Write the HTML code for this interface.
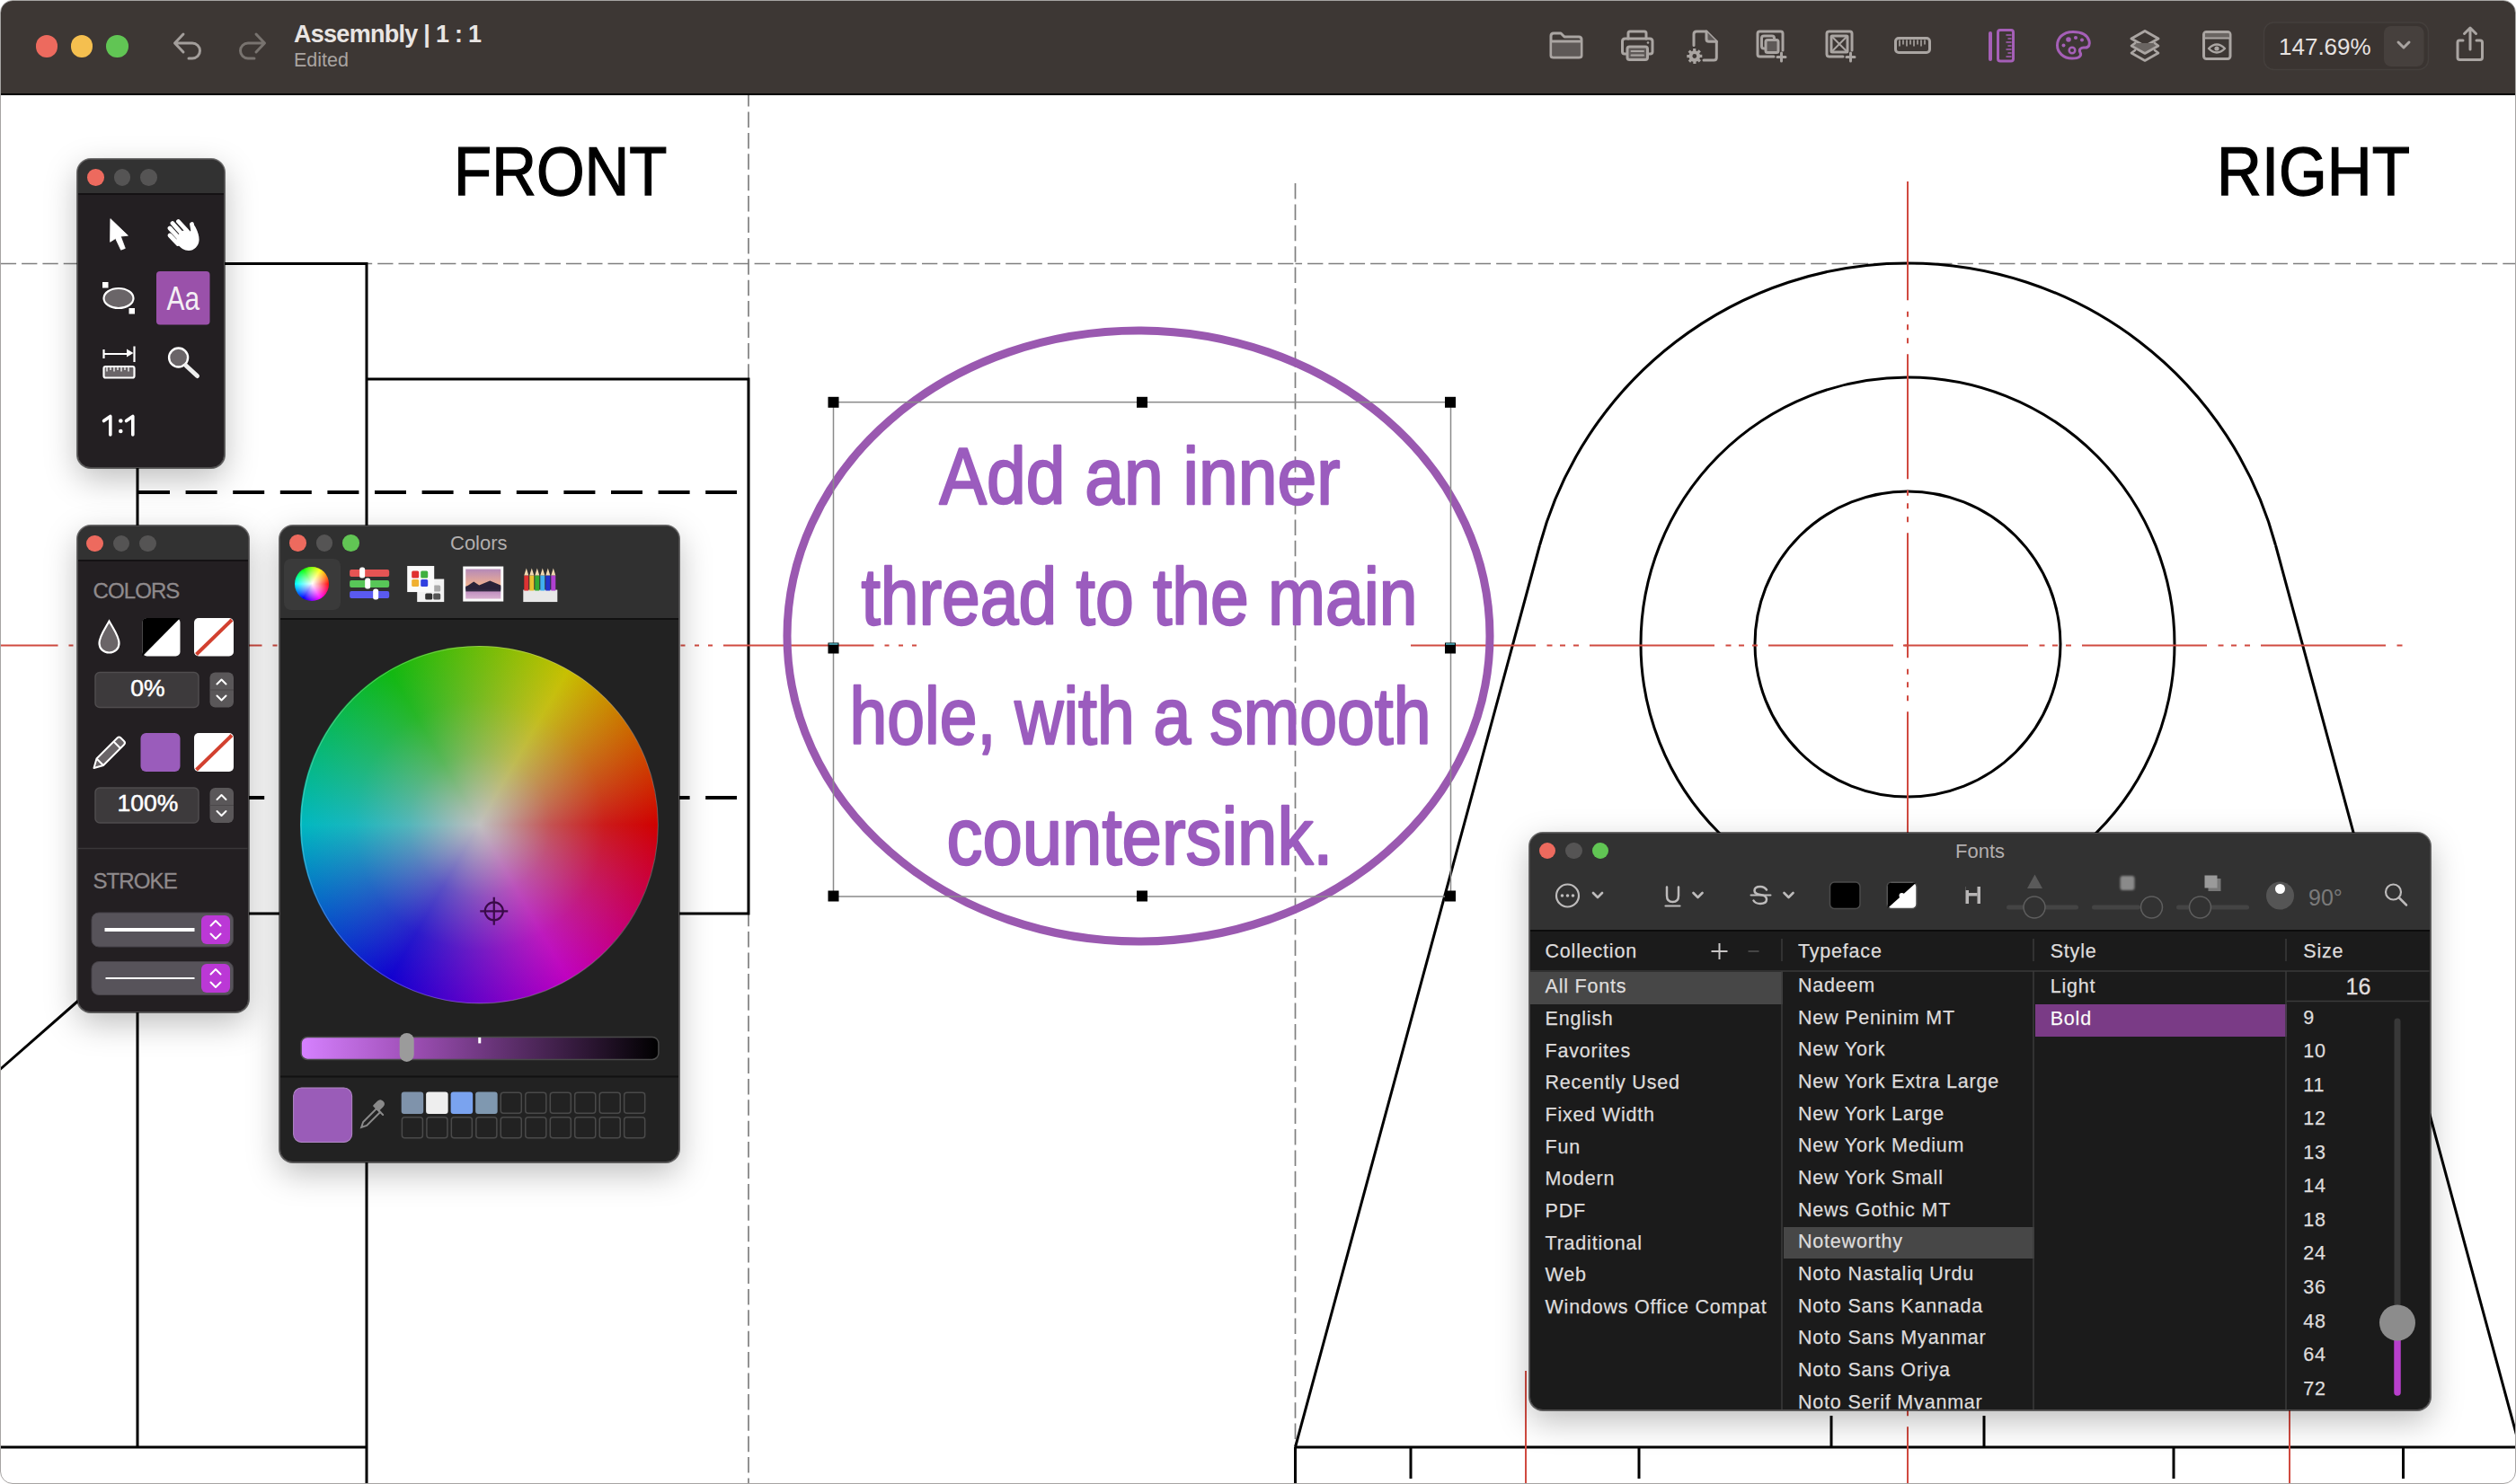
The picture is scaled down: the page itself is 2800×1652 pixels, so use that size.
<!DOCTYPE html>
<html><head><meta charset="utf-8">
<style>
html,body{margin:0;padding:0;width:2800px;height:1652px;overflow:hidden;background:#fff;font-family:"Liberation Sans",sans-serif;}
.abs{position:absolute;}
#win{position:absolute;left:0;top:0;width:2798px;height:1650px;border:1px solid #a6a4a3;border-radius:14px;overflow:hidden;background:#fff;}
#titlebar{position:absolute;left:0;top:0;width:2800px;height:103px;background:#3d3734;border-bottom:2px solid #000;}
.tl{position:absolute;border-radius:50%;}
svg{position:absolute;left:0;top:0;}
.panel{position:absolute;box-sizing:border-box;border-radius:15px;border:1.5px solid #4e4c4d;box-shadow:0 0 0 1px rgba(0,0,0,0.55),0 12px 36px rgba(0,0,0,0.26);overflow:hidden;}
.ptitle{position:absolute;left:0;top:0;right:0;background:#323232;border-bottom:2px solid #141214;}
.txt{position:absolute;white-space:nowrap;line-height:1;}
</style></head><body>
<div id="win">
<!-- CANVAS -->
<svg width="2800" height="1652" viewBox="0 0 2800 1652" style="left:-1px;top:-1px">
  <!-- gray dashed construction lines -->
  <g stroke="#7f7f7f" stroke-width="1.7" fill="none" stroke-dasharray="17.5 5.9">
    <line x1="0" y1="293.5" x2="1441.5" y2="293.5" stroke-dasharray="17.3 6" stroke-dashoffset="-0.8"/>
    <line x1="1441.5" y1="293.5" x2="2800" y2="293.5" stroke-dasharray="17.3 6.037" stroke-dashoffset="-13.6"/>
    <line x1="833" y1="104" x2="833" y2="1652" stroke-dashoffset="2.9"/>
    <line x1="1441.5" y1="204" x2="1441.5" y2="1611"/>
  </g>
  <!-- black solid geometry (FRONT view) -->
  <g stroke="#000" stroke-width="3" fill="none">
    <polyline points="153,293.5 408,293.5 408,1652"/>
    <polyline points="408,422 833,422 833,1017 250,1017"/>
    <line x1="153" y1="480" x2="153" y2="1611"/>
    <line x1="0" y1="1611" x2="408" y2="1611"/>
    <line x1="0" y1="1190.5" x2="90" y2="1111.5"/>
  </g>
  <g stroke="#000" stroke-width="4" fill="none" stroke-dasharray="35 17.6">
    <line x1="154" y1="548" x2="820" y2="548"/>
    <line x1="154" y1="888" x2="820" y2="888"/>
  </g>
  <!-- RIGHT view -->
  <g stroke="#000" stroke-width="3" fill="none">
    <path d="M1713.5,607 A424,424 0 0 1 2532.5,607"/>
    <line x1="1713.5" y1="607" x2="1441.5" y2="1611"/>
    <line x1="2532.5" y1="607" x2="2808" y2="1625"/>
    <circle cx="2123" cy="717" r="297"/>
    <circle cx="2123" cy="717" r="170"/>
    <line x1="1441.5" y1="1611" x2="2800" y2="1611"/>
    <line x1="1441.5" y1="1611" x2="1441.5" y2="1652"/>
    <line x1="1570" y1="1611" x2="1570" y2="1646"/>
    <line x1="1824" y1="1611" x2="1824" y2="1646"/>
    <line x1="2038" y1="1576" x2="2038" y2="1611"/>
    <line x1="2208" y1="1576" x2="2208" y2="1611"/>
    <line x1="2419" y1="1611" x2="2419" y2="1646"/>
    <line x1="2674.5" y1="1611" x2="2674.5" y2="1646"/>
  </g>
  <!-- red centerlines -->
  <g stroke="#d04a40" stroke-width="2" fill="none">
    <line x1="0" y1="718.5" x2="1020" y2="718.5" stroke-dasharray="167.5 12 5 10.5 5 10 5 12" stroke-dashoffset="103"/>
    <line x1="1570" y1="718.5" x2="2123" y2="718.5" stroke-dasharray="139 12.5 6 8.5 6 9 6 12" />
    <line x1="2118" y1="718.5" x2="2677" y2="718.5" stroke-dasharray="139 12.5 6 8.5 6 9 6 12" />
    <line x1="2123" y1="202" x2="2123" y2="1652" stroke-dasharray="139 12.5 6 8.5 6 9 6 12" stroke-dashoffset="6.8"/>
    <line x1="1698" y1="1526" x2="1698" y2="1652"/>
    <line x1="2548" y1="1560" x2="2548" y2="1652"/>
  </g>
  <!-- FRONT / RIGHT labels -->
  <text x="505" y="216.7" font-family="Liberation Sans" font-size="76" fill="#000" stroke="#000" stroke-width="1.3" textLength="237.5" lengthAdjust="spacingAndGlyphs">FRONT</text>
  <text x="2467" y="216.7" font-family="Liberation Sans" font-size="76" fill="#000" stroke="#000" stroke-width="1.3" textLength="215" lengthAdjust="spacingAndGlyphs">RIGHT</text>
  <!-- annotation ellipse -->
  <ellipse cx="1267" cy="708" rx="391" ry="340" stroke="#9a59b0" stroke-width="9" fill="none"/>
  <!-- selection box -->
  <rect x="927.5" y="447.7" width="687" height="550.3" stroke="#8a8a8a" stroke-width="1.5" fill="none"/>
  <g fill="#000">
    <rect x="921.5" y="441.8" width="12" height="12"/>
    <rect x="1265" y="441.8" width="12" height="12"/>
    <rect x="1608" y="441.8" width="12" height="12"/>
    <rect x="921.5" y="715.5" width="12" height="12"/>
    <rect x="1608" y="715.5" width="12" height="12"/>
    <rect x="921.5" y="991.5" width="12" height="12"/>
    <rect x="1265" y="991.5" width="12" height="12"/>
    <rect x="1608" y="991.5" width="12" height="12"/>
  </g>
  <rect x="922.5" y="715.8" width="10" height="2.2" fill="#3f8f9c"/>
  <rect x="1609" y="715.8" width="10" height="2.2" fill="#3f8f9c"/>
  <g font-family="Liberation Sans" font-size="89" fill="#9b5cbe" stroke="#9b5cbe" stroke-width="2.4" stroke-linejoin="round" stroke-linecap="round">
    <text x="1045.5" y="561" textLength="446" lengthAdjust="spacingAndGlyphs">Add an inner</text>
    <text x="958.5" y="694.5" textLength="619" lengthAdjust="spacingAndGlyphs">thread to the main</text>
    <text x="945.5" y="828" textLength="647" lengthAdjust="spacingAndGlyphs">hole, with a smooth</text>
    <text x="1053.5" y="961.5" textLength="430" lengthAdjust="spacingAndGlyphs">countersink.</text>
  </g>
</svg>

<!-- TITLE BAR -->
<div id="titlebar">
  <div class="tl" style="left:38.5px;top:38px;width:24.5px;height:24.5px;background:#ed6a5e;"></div>
  <div class="tl" style="left:77.5px;top:38px;width:24.5px;height:24.5px;background:#f5bf4f;"></div>
  <div class="tl" style="left:117px;top:38px;width:24.5px;height:24.5px;background:#61c554;"></div>
  <svg width="2800" height="103" viewBox="0 0 2800 103" style="left:-1px;top:-1px" fill="none" stroke="#aaa5a2" stroke-width="3" stroke-linecap="round" stroke-linejoin="round">
    <!-- undo -->
    <path d="M210,65 H214 A8.5,8.5 0 0 0 214,48 H195 M204,38 L194.5,48 L204,58" stroke="#a39e9b" stroke-width="3"/>
    <!-- redo -->
    <path d="M283,65 H276 A8.5,8.5 0 0 1 276,48 H294 M285,38 L294.5,48 L285,58" stroke="#78736f" stroke-width="3"/>
    <!-- folder -->
    <path d="M1726,62 V40 Q1726,37 1729,37 H1737 L1741,41 H1757 Q1760,41 1760,44 V62 Q1760,64 1757,64 H1729 Q1726,64 1726,62 Z"/>
    <path d="M1727.5,47 H1758.5 V62 H1727.5 Z" fill="#5e5957" stroke="none"/>
    <line x1="1727" y1="46" x2="1759" y2="46"/>
    <!-- printer -->
    <path d="M1812,43 V37 Q1812,35 1814,35 H1830 Q1832,35 1832,37 V43"/>
    <path d="M1810,60 H1808 Q1805.5,60 1805.5,57.5 V46 Q1805.5,43 1808.5,43 H1836 Q1839,43 1839,46 V57.5 Q1839,60 1836.5,60 H1834"/>
    <rect x="1811" y="52" width="22.5" height="14.5" rx="2.5" fill="#5e5957"/>
    <line x1="1815.5" y1="57" x2="1829" y2="57" stroke-width="2"/>
    <line x1="1815.5" y1="61.5" x2="1829" y2="61.5" stroke-width="2"/>
    <circle cx="1834" cy="47.5" r="1.3" fill="#aaa5a2" stroke="none"/>
    <!-- doc gear -->
    <path d="M1885,50.5 V38 Q1885,35 1888,35 H1899 L1910.3,46.3 V64 Q1910.3,67 1907.3,67 H1896"/>
    <path d="M1899,35 V43.5 Q1899,46.3 1901.8,46.3 H1910.3" fill="#5e5957"/>
    <g fill="#aaa5a2" stroke="none"><rect x="1884.10" y="54.00" width="3.2" height="3.5" transform="rotate(0 1885.8 62.5)"/><rect x="1884.10" y="54.00" width="3.2" height="3.5" transform="rotate(45 1885.8 62.5)"/><rect x="1884.10" y="54.00" width="3.2" height="3.5" transform="rotate(90 1885.8 62.5)"/><rect x="1884.10" y="54.00" width="3.2" height="3.5" transform="rotate(135 1885.8 62.5)"/><rect x="1884.10" y="54.00" width="3.2" height="3.5" transform="rotate(180 1885.8 62.5)"/><rect x="1884.10" y="54.00" width="3.2" height="3.5" transform="rotate(225 1885.8 62.5)"/><rect x="1884.10" y="54.00" width="3.2" height="3.5" transform="rotate(270 1885.8 62.5)"/><rect x="1884.10" y="54.00" width="3.2" height="3.5" transform="rotate(315 1885.8 62.5)"/><circle cx="1885.8" cy="62.5" r="6.3"/></g>
    <circle cx="1885.8" cy="62.5" r="2.4" fill="#3d3734" stroke="none"/>
    <!-- duplicate + -->
    <path d="M1984,56 V37.5 Q1984,35 1981.5,35 H1958.5 Q1956,35 1956,37.5 V60.5 Q1956,63 1958.5,63 H1974"/>
    <rect x="1960.5" y="40" width="14" height="14" rx="2.5"/>
    <rect x="1965" y="44.5" width="14" height="14" rx="2" fill="#5e5957"/>
    <path d="M1982.5,59 V68 M1978,63.5 H1987" stroke-width="3"/>
    <!-- box x + -->
    <path d="M2061,56 V37.5 Q2061,35 2058.5,35 H2035.5 Q2033,35 2033,37.5 V60.5 Q2033,63 2035.5,63 H2051"/>
    <rect x="2038" y="40" width="18" height="18" rx="1"/>
    <path d="M2039,41 L2055,57 M2055,41 L2039,57" stroke-width="2"/>
    <path d="M2059.5,59 V68 M2055,63.5 H2064" stroke-width="3"/>
    <!-- ruler -->
    <rect x="2109.5" y="42.5" width="38" height="16" rx="3.5"/>
    <path d="M2114,45 V51 M2118,45 V49 M2122,45 V51 M2126,45 V49 M2130,45 V51 M2134,45 V49 M2138,45 V51 M2142,45 V49" stroke-width="1.6"/>
    <!-- pencil+ruler purple -->
    <g stroke="#a55fb7">
      <path d="M2215,37 V66" stroke-width="4"/>
      <rect x="2223.5" y="33.5" width="17" height="34.5" rx="2.5"/>
      <path d="M2233,39 H2238 M2235,43 H2238 M2233,47 H2238 M2235,51 H2238 M2233,55 H2238 M2235,59 H2238 M2233,63 H2238" stroke-width="1.5"/>
    </g>
    <!-- palette purple -->
    <g stroke="#a55fb7">
      <path d="M2307,35.5 C2295,35.5 2289.5,43 2289.5,50.5 C2289.5,58 2296,65 2306,65 C2314,65 2317,62 2315,58.5 C2313,55 2316,52.5 2320,53 C2325,53.5 2326,49 2325,45.5 C2323,39 2316,35.5 2307,35.5 Z"/>
      <circle cx="2302" cy="44" r="2.8" fill="#a55fb7" stroke="none"/>
      <circle cx="2310" cy="42" r="2.1" fill="#a55fb7" stroke="none"/>
      <circle cx="2317" cy="44.5" r="2" fill="#a55fb7" stroke="none"/>
      <circle cx="2296.5" cy="50.5" r="2" fill="#a55fb7" stroke="none"/>
      <circle cx="2306" cy="56" r="3.3" stroke-width="2.5"/>
    </g>
    <!-- layers -->
    <path d="M2387,34.5 L2402,43 L2387,51.5 L2372,43 Z" fill="#3c3633"/>
    <path d="M2376,48 L2372,51 L2387,59.5 L2402,51 L2398,48" fill="#6a6562" stroke-width="2.6"/>
    <path d="M2376,56 L2372,59 L2387,67.5 L2402,59 L2398,56" stroke-width="2.6"/>
    <!-- eye window -->
    <rect x="2452.5" y="35.5" width="29.5" height="30" rx="3"/>
    <rect x="2454" y="37" width="26.5" height="5" fill="#6a6562" stroke="none"/>
    <line x1="2453" y1="42.5" x2="2482" y2="42.5" stroke-width="2"/>
    <path d="M2458,54 Q2467,45 2476,54 Q2467,63 2458,54 Z" stroke-width="2.4"/>
    <circle cx="2467" cy="54" r="2.6" fill="#aaa5a2" stroke="none"/>
    <!-- zoom field -->
    <rect x="2519.5" y="25" width="183" height="52.5" rx="11" stroke="#443f3c" stroke-width="1.5" fill="#3a3431"/>
    <rect x="2653" y="29" width="44.5" height="45" rx="8" fill="#46403d" stroke="none"/>
    <path d="M2669,47 L2675,53 L2681,47" stroke="#a9a4a1" stroke-width="3"/>
    <!-- share -->
    <path d="M2741,45 H2737 Q2735,45 2735,47.5 V64 Q2735,66.5 2737.5,66.5 H2760 Q2762.5,66.5 2762.5,64 V47.5 Q2762.5,45 2760,45 H2756"/>
    <path d="M2749,55 V31.5 M2742.5,37.5 L2749,31 L2755.5,37.5"/>
  </svg>
  <div class="txt" style="left:326px;top:23.5px;font-size:27px;font-weight:bold;color:#e9e5e3;letter-spacing:-0.72px;">Assemnbly | 1 : 1</div>
  <div class="txt" style="left:326px;top:56px;font-size:21.5px;color:#a9a4a1;">Edited</div>
  <div class="txt" style="left:2535px;top:37.5px;font-size:26px;color:#e6e2e0;">147.69%</div>
</div>
</div>
<!-- TOOL PALETTE -->
<div class="panel" style="left:86px;top:177px;width:164px;height:343.5px;background:#231f22;">
  <div class="ptitle" style="height:37px;"></div>
  <div class="tl" style="left:10.0px;top:10.0px;width:18.5px;height:18.5px;background:#ed6a5e;"></div>
  <div class="tl" style="left:39.5px;top:10.0px;width:18.5px;height:18.5px;background:#555454;"></div>
  <div class="tl" style="left:69.0px;top:10.0px;width:18.5px;height:18.5px;background:#555454;"></div>
  <svg width="164" height="344" viewBox="86 177 164 344" style="left:-1.5px;top:-1.5px">
    <!-- arrow -->
    <path d="M122.9,243.6 L122.6,269.3 L128.6,265.5 L134.6,278.2 L139.3,276.4 L134.3,263.1 L142.4,262.2 Z" fill="#fff" stroke="#fff" stroke-width="0.8" stroke-linejoin="round"/>
    <!-- hand -->
    <g stroke="#fff" stroke-width="4.8" stroke-linecap="round">
      <line x1="198.5" y1="246.5" x2="209" y2="258"/>
      <line x1="192" y1="248.5" x2="204" y2="262"/>
      <line x1="189" y1="254" x2="201" y2="267"/>
      <line x1="189" y1="262" x2="198" y2="271.5"/>
      <line x1="213.5" y1="249.5" x2="215" y2="258"/>
    </g>
    <path d="M196.5,266 L199.5,260 L204,256.5 L212,257.5 L216.5,251 C220,257 222,263 221.5,268 C221,274 216,279 210,279 C205,279 201,276 196.5,271 Z" fill="#fff"/>
    <!-- ellipse tool -->
    <rect x="114" y="314" width="6.5" height="6.5" fill="#fff"/>
    <rect x="143.5" y="343" width="6.5" height="6.5" fill="#fff"/>
    <ellipse cx="132" cy="332" rx="16.5" ry="11" fill="#6a6568" stroke="#fff" stroke-width="2.2"/>
    <!-- Aa -->
    <rect x="174" y="302" width="59.5" height="59.5" rx="4" fill="#9a51aa"/>
    <!-- ruler measure -->
    <g stroke="#fff" stroke-width="2.2" fill="none">
      <path d="M115.5,389 V399 M115.5,394 H145 M149.5,385.5 V403"/>
      <rect x="115.5" y="408" width="34" height="12.5" rx="2" fill="#6a6568"/>
      <path d="M119,409 V413.5 M123,409 V412 M127,409 V413.5 M131,409 V412 M135,409 V413.5 M139,409 V412 M143,409 V413.5" stroke-width="1.3"/>
    </g>
    <path d="M141,388.5 L148.5,393 L141,397.5 Z" fill="#fff"/>
    <text x="185.5" y="345" font-family="Liberation Sans" font-size="37" fill="#f4eff4" textLength="36.5" lengthAdjust="spacingAndGlyphs">Aa</text>
    <g stroke="#fff" stroke-width="3.6" fill="none" stroke-linecap="round" stroke-linejoin="round">
      <path d="M115.5,468.5 L122.8,463.5 V484"/>
      <path d="M140.5,468.5 L147.8,463.5 V484"/>
    </g>
    <circle cx="134.3" cy="468.5" r="2.3" fill="#fff"/>
    <circle cx="134.3" cy="480" r="2.3" fill="#fff"/>
    <!-- magnifier -->
    <circle cx="198.6" cy="398" r="10.5" fill="#6a6568" stroke="#fff" stroke-width="2.4"/>
    <path d="M207,407 L219.5,418.5" stroke="#eee" stroke-width="5" stroke-linecap="round"/>
  </svg>
  
  
</div>

<!-- COLORS INSPECTOR -->
<div class="panel" style="left:85.5px;top:584.5px;width:191px;height:542px;background:#231f22;">
  <div class="ptitle" style="height:37px;"></div>
  <div class="tl" style="left:9.5px;top:10.0px;width:18.5px;height:18.5px;background:#ed6a5e;"></div>
  <div class="tl" style="left:39.0px;top:10.0px;width:18.5px;height:18.5px;background:#555454;"></div>
  <div class="tl" style="left:68.5px;top:10.0px;width:18.5px;height:18.5px;background:#555454;"></div>
  <div class="txt" style="left:17px;top:60.5px;font-size:24px;color:#8f8a8c;letter-spacing:-0.9px;-webkit-text-stroke:0.3px #8f8a8c;">COLORS</div>
  <div class="txt" style="left:17px;top:383px;font-size:24px;color:#8f8a8c;letter-spacing:-0.9px;-webkit-text-stroke:0.3px #8f8a8c;">STROKE</div>
  <svg width="191" height="542" viewBox="85.5 584.5 191 542" style="left:-1.5px;top:-1.5px">
    <!-- drop -->
    <path d="M122,692 C117,701 111,709 111,716.5 C111,723 116,727 122,727 C128,727 133,723 133,716.5 C133,709 127,701 122,692 Z" fill="#6a6568" stroke="#fff" stroke-width="2.2"/>
    <!-- bw swatch -->
    <rect x="159" y="688.5" width="42" height="42.5" rx="5" fill="#fff"/>
    <path d="M164,688.5 H201 L159,731 V693.5 Q159,688.5 164,688.5 Z" fill="#000"/>
    <!-- none swatch -->
    <rect x="216.5" y="688.5" width="44" height="42.5" rx="5" fill="#fff"/>
    <path d="M219,729 L258.5,690.5" stroke="#d2402f" stroke-width="4"/>
    <!-- 0% field -->
    <rect x="106.5" y="749" width="115" height="39" rx="5" fill="#3d3a3c" stroke="#4f4c4e" stroke-width="1.5"/>
    <rect x="234" y="749" width="26.5" height="39" rx="6" fill="#5a5759"/>
    <line x1="234" y1="768.5" x2="260.5" y2="768.5" stroke="#4a4749" stroke-width="1"/>
    <path d="M242,762 L247,757 L252,762 M242,775 L247,780 L252,775" stroke="#fff" stroke-width="2" fill="none" stroke-linecap="round" stroke-linejoin="round"/>
    <!-- pencil -->
    <g stroke="#fff" stroke-width="2" fill="none" stroke-linejoin="round">
      <path d="M105,855.5 L108,845 L131,822 Q133,820 135,822 L138.5,825.5 Q140.5,827.5 138.5,829.5 L115.5,852.5 Z" fill="#6a6568"/>
      <path d="M127,826 L134.5,833.5 M108,845 L115.5,852.5"/>
    </g>
    <!-- purple swatch -->
    <rect x="157" y="816.5" width="44" height="43" rx="6" fill="#9a5cbb"/>
    <rect x="216.5" y="816.5" width="44" height="43" rx="5" fill="#fff"/>
    <path d="M219,857.5 L258.5,819" stroke="#d2402f" stroke-width="4"/>
    <!-- 100% field -->
    <rect x="106.5" y="877.5" width="115" height="39" rx="5" fill="#3d3a3c" stroke="#4f4c4e" stroke-width="1.5"/>
    <rect x="234" y="877.5" width="26.5" height="39" rx="6" fill="#5a5759"/>
    <line x1="234" y1="897" x2="260.5" y2="897" stroke="#4a4749" stroke-width="1"/>
    <path d="M242,890.5 L247,885.5 L252,890.5 M242,903.5 L247,908.5 L252,903.5" stroke="#fff" stroke-width="2" fill="none" stroke-linecap="round" stroke-linejoin="round"/>
    <!-- separator -->
    <line x1="86" y1="945" x2="276" y2="945" stroke="#3a3739" stroke-width="1.5"/>
    <!-- stroke popups -->
    <rect x="102.5" y="1016.5" width="157.5" height="38" rx="8" fill="#57535a" stroke="#474349" stroke-width="1"/>
    <rect x="224.5" y="1019.5" width="32" height="32" rx="6" fill="#bb38d6"/>
    <line x1="117" y1="1035.5" x2="217" y2="1035.5" stroke="#fff" stroke-width="4"/>
    <path d="M235,1031 L240.5,1025.5 L246,1031 M235,1040 L240.5,1045.5 L246,1040" stroke="#fff" stroke-width="2" fill="none" stroke-linecap="round" stroke-linejoin="round"/>
    <rect x="102.5" y="1071" width="157.5" height="37" rx="8" fill="#57535a" stroke="#474349" stroke-width="1"/>
    <rect x="224.5" y="1073.5" width="32" height="32" rx="6" fill="#bb38d6"/>
    <line x1="118" y1="1089.5" x2="217" y2="1089.5" stroke="#fff" stroke-width="1.8"/>
    <path d="M235,1085 L240.5,1079.5 L246,1085 M235,1094 L240.5,1099.5 L246,1094" stroke="#fff" stroke-width="2" fill="none" stroke-linecap="round" stroke-linejoin="round"/>
  </svg>
  <div class="txt" style="left:20.5px;top:167px;width:115px;text-align:center;font-size:26.5px;color:#fff;-webkit-text-stroke:0.5px #fff;">0%</div>
  <div class="txt" style="left:20.5px;top:295.5px;width:115px;text-align:center;font-size:26.5px;color:#fff;-webkit-text-stroke:0.5px #fff;">100%</div>
</div>
<!-- COLORS WINDOW -->
<div class="panel" style="left:311px;top:584.5px;width:444.5px;height:709.5px;background:#222222;">
  <div class="ptitle" style="height:102px;background:#303030;border-bottom:2px solid #111;"></div>
  <div class="tl" style="left:10.0px;top:9.5px;width:18.5px;height:18.5px;background:#ed6a5e;"></div>
  <div class="tl" style="left:39.5px;top:9.5px;width:18.5px;height:18.5px;background:#555454;"></div>
  <div class="tl" style="left:69.0px;top:9.5px;width:18.5px;height:18.5px;background:#61c554;"></div>
  <div class="txt" style="left:189px;top:8.5px;font-size:22px;color:#b2aeae;">Colors</div>
  <div class="abs" style="left:3.5px;top:36.5px;width:63px;height:57px;border-radius:8px;background:#3a3a3a;"></div>
  <div class="abs" style="left:16px;top:45px;width:38px;height:38px;border-radius:50%;background:conic-gradient(from 90deg,#ff0000,#ff00ff 60deg,#0000ff 120deg,#00ffff 180deg,#00ff00 240deg,#ffff00 300deg,#ff0000 360deg);"></div>
  <div class="abs" style="left:21.5px;top:133px;width:398px;height:398px;border-radius:50%;background:conic-gradient(from 90deg,#d00000,#c000c0 60deg,#1000d0 120deg,#00b8c0 180deg,#10b810 240deg,#c8c000 300deg,#d00000 360deg);"></div>
  <svg width="445" height="710" viewBox="311 584.5 444.5 709.5" style="left:-1.5px;top:-1.5px">
    <defs>
      <radialGradient id="wsat" cx="0.5" cy="0.5" r="0.5">
        <stop offset="0" stop-color="#c0c0c0" stop-opacity="1"/>
        <stop offset="0.12" stop-color="#bdbdbd" stop-opacity="0.85"/>
        <stop offset="0.4" stop-color="#b5b5b5" stop-opacity="0.45"/>
        <stop offset="0.7" stop-color="#b0b0b0" stop-opacity="0.15"/>
        <stop offset="1" stop-color="#b0b0b0" stop-opacity="0"/>
      </radialGradient>
      <radialGradient id="isat" cx="0.5" cy="0.5" r="0.5">
        <stop offset="0" stop-color="#fff" stop-opacity="1"/>
        <stop offset="1" stop-color="#fff" stop-opacity="0"/>
      </radialGradient>
      <linearGradient id="bright" x1="0" y1="0" x2="1" y2="0">
        <stop offset="0" stop-color="#d681ff"/>
        <stop offset="0.3" stop-color="#a050b8"/>
        <stop offset="0.6" stop-color="#5a2d68"/>
        <stop offset="1" stop-color="#000"/>
      </linearGradient>
      <clipPath id="wclip"><circle cx="533.5" cy="918.5" r="199"/></clipPath>
      <clipPath id="iclip"><circle cx="347.5" cy="650" r="19"/></clipPath>
    </defs>
    <!-- selected tab bg -->
    
    <!-- wheel icon -->
    <g clip-path="url(#iclip)">
      <circle cx="347.5" cy="650" r="19" fill="url(#isat)"/>
    </g>
    <!-- sliders icon -->
    <rect x="389" y="634.5" width="44" height="8" rx="2" fill="#e65454"/>
    <rect x="389" y="646.5" width="44" height="8" rx="2" fill="#58c658"/>
    <rect x="389" y="658.5" width="44" height="8" rx="2" fill="#5a5af0"/>
    <rect x="400" y="632" width="6" height="12" rx="2.5" fill="#fff"/>
    <rect x="406" y="644" width="6" height="12" rx="2.5" fill="#fff"/>
    <rect x="415" y="656" width="6" height="12" rx="2.5" fill="#fff"/>
    <!-- palettes icon -->
    <rect x="464" y="645" width="30" height="25.5" fill="#f2f2f2"/>
    <rect x="473" y="652" width="8" height="7" rx="1.5" fill="#999"/><rect x="482" y="652" width="8" height="7" rx="1.5" fill="#aaa"/>
    <rect x="473" y="661" width="8" height="7" rx="1.5" fill="#333"/><rect x="482" y="661" width="8" height="7" rx="1.5" fill="#555"/>
    <rect x="453" y="630.5" width="30" height="29" fill="#fafafa"/>
    <rect x="458" y="636" width="8" height="8" rx="1.5" fill="#e03030"/><rect x="468" y="636" width="8" height="8" rx="1.5" fill="#40b040"/>
    <rect x="458" y="645.5" width="8" height="8" rx="1.5" fill="#f0b030"/><rect x="468" y="645.5" width="8" height="8" rx="1.5" fill="#3040e0"/>
    <!-- image icon -->
    <rect x="515" y="631" width="45" height="39" fill="#fafafa"/>
    <defs><linearGradient id="sky" x1="0" y1="0" x2="0" y2="1"><stop offset="0" stop-color="#b58ab8"/><stop offset="0.55" stop-color="#f0b090"/><stop offset="0.6" stop-color="#403050"/><stop offset="0.75" stop-color="#302840"/><stop offset="0.76" stop-color="#c090c0"/><stop offset="1" stop-color="#d8b0d0"/></linearGradient></defs>
    <rect x="518" y="634" width="39" height="33" fill="url(#sky)"/>
    <path d="M518,654 L527,648 L533,652 L545,647 L557,652 V657 H518 Z" fill="#2a2238"/>
    <!-- pencils -->
    <rect x="582" y="657" width="38" height="13.5" fill="#e8e8e8"/>
    <g>
      <rect x="583" y="641" width="5" height="17" fill="#d33"/><rect x="589" y="641" width="5" height="17" fill="#e8c030"/>
      <rect x="595" y="641" width="5" height="17" fill="#3a3"/><rect x="601" y="641" width="5" height="17" fill="#40b0f0"/>
      <rect x="607" y="641" width="5" height="17" fill="#2233cc"/><rect x="613" y="641" width="5" height="17" fill="#b040d0"/>
      <path d="M583,641 L585.5,633 L588,641 Z M589,641 L591.5,633 L594,641 Z M595,641 L597.5,633 L600,641 Z M601,641 L603.5,633 L606,641 Z M607,641 L609.5,633 L612,641 Z M613,641 L615.5,633 L618,641 Z" fill="#f0d8b0"/>
    </g>
    <!-- color wheel -->
    <g clip-path="url(#wclip)">
      <circle cx="533.5" cy="918.5" r="199" fill="url(#wsat)"/>
    </g>
    <circle cx="533.5" cy="918.5" r="198.5" fill="none" stroke="#ffffff" stroke-opacity="0.25" stroke-width="1"/>
    <!-- crosshair -->
    <g stroke="#3a0a48" stroke-width="2.2" fill="none">
      <circle cx="549.5" cy="1014.5" r="10"/>
      <path d="M549.5,999 V1030 M534,1014.5 H565"/>
    </g>
    <!-- brightness slider -->
    <rect x="335" y="1154.5" width="397.5" height="25" rx="7" fill="url(#bright)" stroke="#4a4a4a" stroke-width="1.5"/>
    <rect x="444.5" y="1150" width="16" height="32" rx="8" fill="#9b9b9b"/>
    <rect x="532" y="1155" width="3" height="6.5" fill="#fff"/>
    <!-- bottom separator -->
    <line x1="311" y1="1198.5" x2="755.5" y2="1198.5" stroke="#111" stroke-width="2"/>
    <!-- current swatch -->
    <rect x="326.5" y="1211" width="65" height="60.5" rx="9" fill="#9a5cb8" stroke="#b38ac8" stroke-width="1"/>
    <!-- eyedropper -->
    <g stroke="#8a8a8a" stroke-width="2" fill="none" stroke-linecap="round">
      <path d="M402,1255 L404,1249 L419,1234 L423,1238 L408,1253 Z"/>
      <path d="M416,1231 L426,1241 M421,1236 L425.5,1231.5 Q428,1229 425.5,1226.5 Q423,1224 420.5,1226.5 L416,1231" fill="#8a8a8a"/>
    </g>
    <rect x="446.5" y="1215.5" width="24.5" height="24.5" rx="3" fill="#7f93ab"/>
    <rect x="473.9" y="1215.5" width="24.5" height="24.5" rx="3" fill="#eeeeee"/>
    <rect x="501.4" y="1215.5" width="24.5" height="24.5" rx="3" fill="#7aa3ef"/>
    <rect x="528.9" y="1215.5" width="24.5" height="24.5" rx="3" fill="#7f98b0"/>
    <rect x="557.0" y="1216.2" width="23.0" height="23.0" rx="3" fill="none" stroke="#4a4a4a" stroke-width="1.5"/>
    <rect x="584.5" y="1216.2" width="23.0" height="23.0" rx="3" fill="none" stroke="#4a4a4a" stroke-width="1.5"/>
    <rect x="612.0" y="1216.2" width="23.0" height="23.0" rx="3" fill="none" stroke="#4a4a4a" stroke-width="1.5"/>
    <rect x="639.4" y="1216.2" width="23.0" height="23.0" rx="3" fill="none" stroke="#4a4a4a" stroke-width="1.5"/>
    <rect x="666.9" y="1216.2" width="23.0" height="23.0" rx="3" fill="none" stroke="#4a4a4a" stroke-width="1.5"/>
    <rect x="694.3" y="1216.2" width="23.0" height="23.0" rx="3" fill="none" stroke="#4a4a4a" stroke-width="1.5"/>
    <rect x="447.2" y="1243.8" width="23.0" height="23.0" rx="3" fill="none" stroke="#4a4a4a" stroke-width="1.5"/>
    <rect x="474.7" y="1243.8" width="23.0" height="23.0" rx="3" fill="none" stroke="#4a4a4a" stroke-width="1.5"/>
    <rect x="502.1" y="1243.8" width="23.0" height="23.0" rx="3" fill="none" stroke="#4a4a4a" stroke-width="1.5"/>
    <rect x="529.6" y="1243.8" width="23.0" height="23.0" rx="3" fill="none" stroke="#4a4a4a" stroke-width="1.5"/>
    <rect x="557.0" y="1243.8" width="23.0" height="23.0" rx="3" fill="none" stroke="#4a4a4a" stroke-width="1.5"/>
    <rect x="584.5" y="1243.8" width="23.0" height="23.0" rx="3" fill="none" stroke="#4a4a4a" stroke-width="1.5"/>
    <rect x="612.0" y="1243.8" width="23.0" height="23.0" rx="3" fill="none" stroke="#4a4a4a" stroke-width="1.5"/>
    <rect x="639.4" y="1243.8" width="23.0" height="23.0" rx="3" fill="none" stroke="#4a4a4a" stroke-width="1.5"/>
    <rect x="666.9" y="1243.8" width="23.0" height="23.0" rx="3" fill="none" stroke="#4a4a4a" stroke-width="1.5"/>
    <rect x="694.3" y="1243.8" width="23.0" height="23.0" rx="3" fill="none" stroke="#4a4a4a" stroke-width="1.5"/>
  </svg>
</div>
<!-- FONTS WINDOW -->
<style>.ft{font-size:21.5px;color:#dedcdc;letter-spacing:0.8px;-webkit-text-stroke:0.25px #dedcdc;}</style>
<div class="panel" style="left:1701.5px;top:927px;width:1003px;height:643px;background:#1b1b1b;">
  <div class="ptitle" style="height:106.5px;background:#323232;border-bottom:2px solid #0c0c0c;"></div>
  <div class="tl" style="left:10.0px;top:9.5px;width:18.5px;height:18.5px;background:#ed6a5e;"></div>
  <div class="tl" style="left:39.5px;top:9.5px;width:18.5px;height:18.5px;background:#555454;"></div>
  <div class="tl" style="left:69.0px;top:9.5px;width:18.5px;height:18.5px;background:#61c554;"></div>
  <div class="txt" style="left:473.5px;top:9px;font-size:22px;color:#b2aeae;">Fonts</div>
  <!-- selection highlights -->
  <div class="abs" style="left:0px;top:154px;width:281.5px;height:36px;background:#474747;"></div>
  <div class="abs" style="left:282.5px;top:437.5px;width:279px;height:35.5px;background:#474747;"></div>
  <div class="abs" style="left:562.8000000000002px;top:190.4000000000001px;width:279.7px;height:35.5px;background:#7a3b86;"></div>
  <svg width="1003" height="643" viewBox="1701.5 927 1003 643" style="left:-1.5px;top:-1.5px">
    <!-- header bottom line -->
    <line x1="1702" y1="1081" x2="2704" y2="1081" stroke="#3a3a3a" stroke-width="1.5"/>
    <!-- column separators -->
    <g stroke="#3b3b3b" stroke-width="1.5">
      <line x1="1983.5" y1="1045" x2="1983.5" y2="1070"/>
      <line x1="2263.5" y1="1045" x2="2263.5" y2="1070"/>
      <line x1="2544.5" y1="1045" x2="2544.5" y2="1070"/>
      <line x1="1983.5" y1="1081" x2="1983.5" y2="1570"/>
      <line x1="2263.5" y1="1081" x2="2263.5" y2="1570"/>
      <line x1="2544.5" y1="1081" x2="2544.5" y2="1570"/>
      <line x1="2545" y1="1114.5" x2="2704" y2="1114.5"/>
    </g>
    <!-- plus / minus -->
    <path d="M1914,1050 V1068 M1905,1059 H1923" stroke="#c8c6c6" stroke-width="2"/>
    <path d="M1946,1059 H1958" stroke="#555" stroke-width="1.5"/>
    <!-- toolbar icons -->
    <g stroke="#bdbbbb" stroke-width="2.2" fill="none" stroke-linecap="round" stroke-linejoin="round">
      <circle cx="1745" cy="997" r="12.5"/>
      <path d="M1773.5,994 L1778.5,999 L1783.5,994 M1885,994 L1890,999 L1895,994 M1986,994 L1991,999 L1996,994" stroke-width="2.6"/>
      <path d="M1855.5,987.5 V997 Q1855.5,1004 1862,1004 Q1868.5,1004 1868.5,997 V987.5" stroke-width="2.5"/>
      <path d="M1854,1008.5 H1870" stroke-width="2.2"/>
      <path d="M1966.5,990.5 Q1964,987 1959.5,987 Q1953,987 1953,991.5 Q1953,995 1959.5,996 Q1966.5,997 1966.5,1001 Q1966.5,1006 1959.5,1006 Q1954,1006 1952,1002.5" stroke-width="2.5"/>
      <path d="M1949,996.5 H1971" stroke-width="2"/>
    </g>
    <g fill="#bdbbbb"><circle cx="1739" cy="997" r="1.8"/><circle cx="1745" cy="997" r="1.8"/><circle cx="1751" cy="997" r="1.8"/></g>
    <!-- color swatches -->
    <rect x="2037" y="982" width="33.5" height="29.5" rx="5" fill="#000" stroke="#4b4b4b" stroke-width="1.5"/>
    <rect x="2100.5" y="982" width="33" height="29.5" rx="5" fill="#fff" stroke="#4b4b4b" stroke-width="1.5"/>
    <path d="M2105,982.7 H2132.8 L2101.2,1011 V987 Q2101.2,982.7 2105,982.7 Z" fill="#000"/>
    <circle cx="2117" cy="997" r="3" fill="#fff"/>
    <!-- paragraph icon -->
    <g fill="#b8b6b6"><rect x="2188" y="987" width="3.5" height="19"/><rect x="2201" y="987" width="3.5" height="19"/><rect x="2191" y="994" width="10" height="3.5"/><rect x="2188" y="987" width="3.5" height="4" fill="#323232"/></g>
    <!-- sliders -->
    <g stroke="#444" stroke-width="5" stroke-linecap="round">
      <line x1="2236" y1="1010" x2="2311" y2="1010"/>
      <line x1="2331" y1="1010" x2="2380" y2="1010"/>
      <line x1="2425" y1="1010" x2="2501" y2="1010"/>
    </g>
    <g stroke="#5e5e5e" stroke-width="1.6" fill="#323232">
      <circle cx="2264.5" cy="1010" r="12"/>
      <circle cx="2395" cy="1010" r="12"/>
      <circle cx="2449" cy="1010" r="12"/>
    </g>
    <path d="M2265,973.5 L2273.5,989 H2256.5 Z" fill="#5a5a5a"/>
    <rect x="2360" y="975" width="16" height="16" rx="3" fill="#8a8a8a" filter="blur(1px)"/>
    <rect x="2458" y="978" width="14" height="14" fill="#777"/>
    <rect x="2454" y="974.5" width="14" height="14" fill="#9a9a9a"/>
    <!-- angle knob -->
    <circle cx="2538" cy="997" r="15.5" fill="#555"/>
    <circle cx="2538" cy="989.5" r="5.5" fill="#fff"/>
    <!-- search -->
    <circle cx="2664" cy="993" r="8.5" stroke="#bdbbbb" stroke-width="2.2" fill="none"/>
    <path d="M2670.5,999.5 L2678.5,1007.5" stroke="#bdbbbb" stroke-width="2.5" stroke-linecap="round"/>
    <!-- size slider -->
    <line x1="2668.5" y1="1137" x2="2668.5" y2="1470" stroke="#383838" stroke-width="7" stroke-linecap="round"/>
    <line x1="2668.5" y1="1480" x2="2668.5" y2="1550" stroke="#b83fcc" stroke-width="7.5" stroke-linecap="round"/>
    <circle cx="2668.5" cy="1472.5" r="20" fill="#8c8c8c"/>
  </svg>
  <div class="txt" style="left:866.5px;top:58.5px;font-size:25px;color:#7a7a7a;">90°</div>
  <div class="txt ft" style="left:17.0px;top:120.7px;">Collection</div>
  <div class="txt ft" style="left:298.5px;top:120.7px;">Typeface</div>
  <div class="txt ft" style="left:579.2px;top:120.7px;">Style</div>
  <div class="txt ft" style="left:860.8px;top:120.7px;">Size</div>
  <div class="txt ft" style="left:579.2px;top:160.3px;">Light</div>
  <div class="txt ft" style="left:579.2px;top:196.0px;color:#fff;">Bold</div>
  <div class="txt" style="left:908px;top:158px;font-size:25px;color:#e0dede;-webkit-text-stroke:0.3px #e0dede;">16</div>
  <div class="txt ft" style="left:17.0px;top:160.3px;">All Fonts</div>
  <div class="txt ft" style="left:17.0px;top:196.0px;">English</div>
  <div class="txt ft" style="left:17.0px;top:231.6px;">Favorites</div>
  <div class="txt ft" style="left:17.0px;top:267.2px;">Recently Used</div>
  <div class="txt ft" style="left:17.0px;top:302.9px;">Fixed Width</div>
  <div class="txt ft" style="left:17.0px;top:338.5px;">Fun</div>
  <div class="txt ft" style="left:17.0px;top:374.2px;">Modern</div>
  <div class="txt ft" style="left:17.0px;top:409.8px;">PDF</div>
  <div class="txt ft" style="left:17.0px;top:445.5px;">Traditional</div>
  <div class="txt ft" style="left:17.0px;top:481.1px;">Web</div>
  <div class="txt ft" style="left:17.0px;top:516.8px;">Windows Office Compat</div>
  <div class="txt ft" style="left:298.5px;top:159.1px;">Nadeem</div>
  <div class="txt ft" style="left:298.5px;top:194.8px;">New Peninim MT</div>
  <div class="txt ft" style="left:298.5px;top:230.4px;">New York</div>
  <div class="txt ft" style="left:298.5px;top:266.0px;">New York Extra Large</div>
  <div class="txt ft" style="left:298.5px;top:301.7px;">New York Large</div>
  <div class="txt ft" style="left:298.5px;top:337.3px;">New York Medium</div>
  <div class="txt ft" style="left:298.5px;top:373.0px;">New York Small</div>
  <div class="txt ft" style="left:298.5px;top:408.6px;">News Gothic MT</div>
  <div class="txt ft" style="left:298.5px;top:444.3px;">Noteworthy</div>
  <div class="txt ft" style="left:298.5px;top:479.9px;">Noto Nastaliq Urdu</div>
  <div class="txt ft" style="left:298.5px;top:515.6px;">Noto Sans Kannada</div>
  <div class="txt ft" style="left:298.5px;top:551.2px;">Noto Sans Myanmar</div>
  <div class="txt ft" style="left:298.5px;top:586.9px;">Noto Sans Oriya</div>
  <div class="txt ft" style="left:298.5px;top:622.5px;">Noto Serif Myanmar</div>
  <div class="txt ft" style="left:860.8px;top:194.5px;">9</div>
  <div class="txt ft" style="left:860.8px;top:232.0px;">10</div>
  <div class="txt ft" style="left:860.8px;top:269.6px;">11</div>
  <div class="txt ft" style="left:860.8px;top:307.2px;">12</div>
  <div class="txt ft" style="left:860.8px;top:344.7px;">13</div>
  <div class="txt ft" style="left:860.8px;top:382.2px;">14</div>
  <div class="txt ft" style="left:860.8px;top:419.8px;">18</div>
  <div class="txt ft" style="left:860.8px;top:457.3px;">24</div>
  <div class="txt ft" style="left:860.8px;top:494.9px;">36</div>
  <div class="txt ft" style="left:860.8px;top:532.5px;">48</div>
  <div class="txt ft" style="left:860.8px;top:570.0px;">64</div>
  <div class="txt ft" style="left:860.8px;top:607.5px;">72</div>
</div>
</body></html>
